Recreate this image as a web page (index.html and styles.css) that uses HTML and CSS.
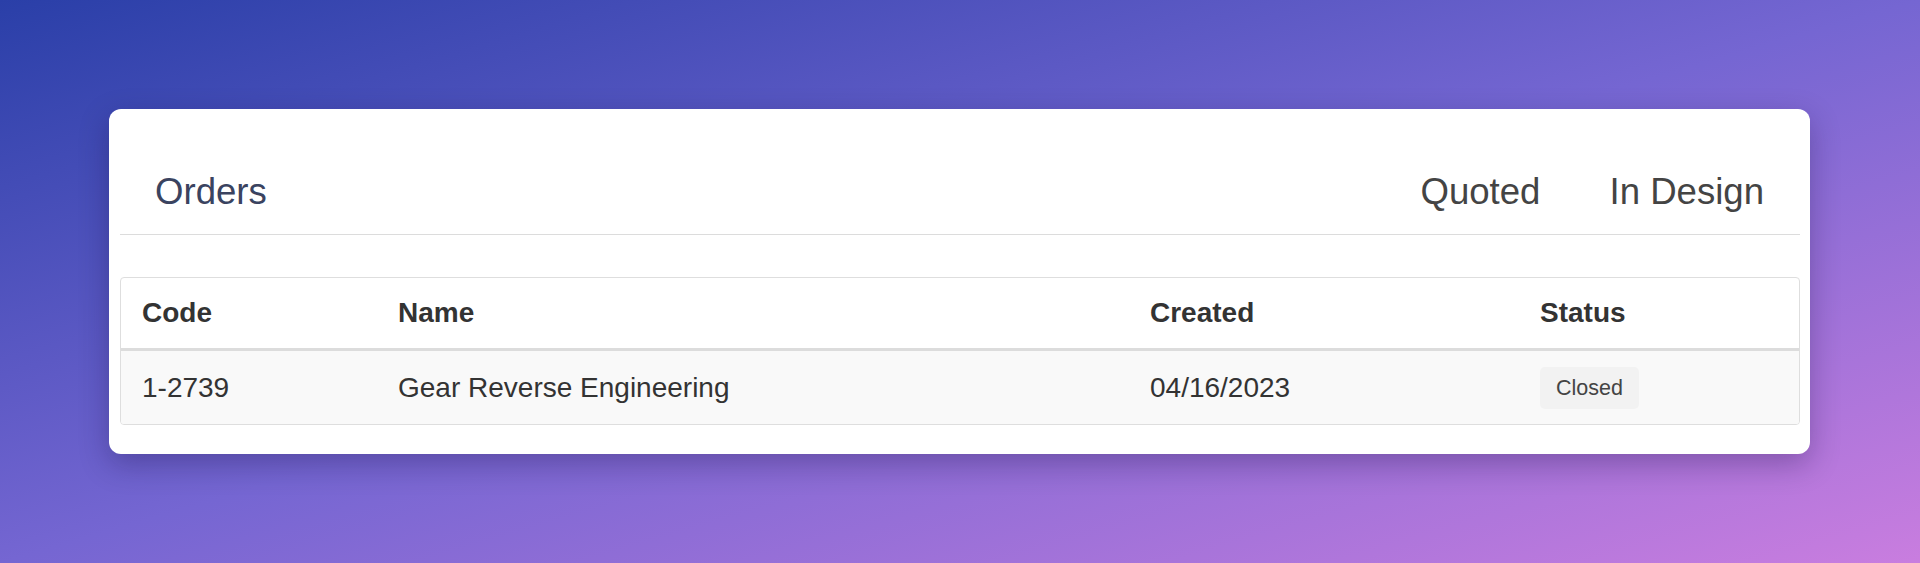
FILE: index.html
```html
<!DOCTYPE html>
<html>
<head>
<meta charset="utf-8">
<link rel="stylesheet" href="styles.css">
</head>
<body>
<div class="page">
  <div class="card">
    <div class="card-header">
      <div class="title">Orders</div>
      <nav class="tabs">
        <span class="tab">Quoted</span>
        <span class="tab">In Design</span>
      </nav>
    </div>
    <div class="table-wrap">
      <table class="orders">
        <colgroup>
          <col class="c-code"><col class="c-name"><col class="c-created"><col class="c-status">
        </colgroup>
        <thead>
          <tr><th>Code</th><th>Name</th><th>Created</th><th>Status</th></tr>
        </thead>
        <tbody>
          <tr>
            <td>1-2739</td>
            <td>Gear Reverse Engineering</td>
            <td>04/16/2023</td>
            <td><span class="badge">Closed</span></td>
          </tr>
        </tbody>
      </table>
    </div>
  </div>
</div>
</body>
</html>
```

FILE: styles.css
```css
html, body {
  margin: 0;
  padding: 0;
}
body {
  width: 1920px;
  height: 563px;
  overflow: hidden;
  font-family: "Liberation Sans", Arial, Helvetica, sans-serif;
  background: linear-gradient(to bottom right, #2a3fa8 0%, #7566d2 50%, #c97ddf 100%);
}
.page {
  padding: 109px 110px 0 109px;
}
.card {
  background: #fff;
  border-radius: 12px;
  padding: 0 10px 29px 11px;
  box-shadow: 0 10px 30px rgba(20, 10, 60, 0.30);
}
.card-header {
  display: flex;
  justify-content: space-between;
  align-items: flex-start;
  padding: 62px 0 21px 0;
  border-bottom: 1px solid #dcdcdc;
  font-size: 36.6px;
  line-height: 42px;
}
.title {
  color: #3a4360;
  padding-left: 35px;
}
.tabs {
  display: flex;
  gap: 69px;
  padding-right: 36px;
}
.tab {
  color: #444;
}
.table-wrap {
  margin-top: 42px;
  border: 1px solid #dedede;
  border-radius: 4px;
  overflow: hidden;
}
.orders {
  width: 100%;
  border-collapse: collapse;
  table-layout: fixed;
  font-size: 28px;
  color: #333;
}
.c-code { width: 256px; }
.c-name { width: 752px; }
.c-created { width: 390px; }
.c-status { width: 280px; }
.orders th {
  text-align: left;
  font-weight: bold;
  height: 71px;
  padding: 1px 21px 0 21px;
  box-sizing: border-box;
  border-bottom: 3px solid #dcdcdc;
  vertical-align: middle;
}
.orders td {
  height: 75px;
  padding: 1px 21px 0 21px;
  box-sizing: border-box;
  background: #f9f9f9;
  vertical-align: middle;
}
.badge {
  display: inline-block;
  background: #f2f2f2;
  color: #444;
  font-size: 21.5px;
  line-height: 42px;
  padding: 0 16px;
  border-radius: 5px;
  vertical-align: middle;
}
```
